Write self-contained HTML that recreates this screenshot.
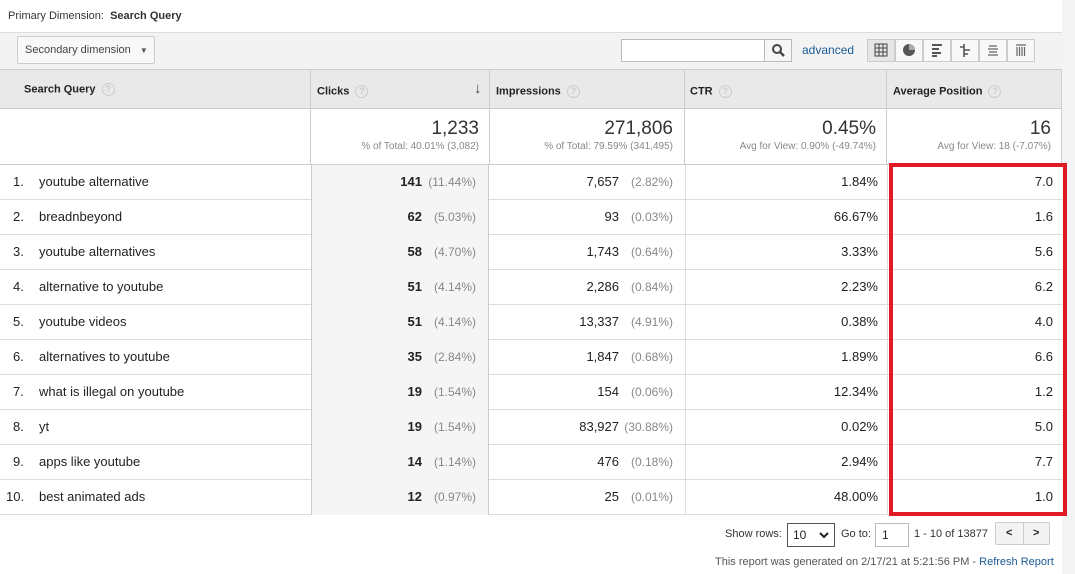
<!DOCTYPE html><html><head><style>
*{margin:0;padding:0;box-sizing:border-box}
body{width:1075px;height:574px;background:#fff;font-family:"Liberation Sans",Arial,sans-serif;color:#222;position:relative;overflow:hidden;font-size:13px}
.a{position:absolute}
.hdr{font-weight:bold;font-size:11px;color:#222}
.q{display:inline-block;width:13px;height:13px;border-radius:50%;border:1px solid #ccc;color:#bbb;font-size:9px;text-align:center;line-height:11px;font-weight:normal;margin-left:6px;vertical-align:middle}
.row{position:absolute;left:0;width:1062px;height:35px;border-bottom:1px solid #ddd}
.c{position:absolute;top:0;height:35px;line-height:34px;white-space:nowrap}
.n{left:13px}.t{left:39px}
.k{left:311px;width:178px;background:#f5f5f5;border-left:1px solid #ccc;border-right:1px solid #ccc;text-align:right;padding-right:12px}
.k b{font-weight:bold}
.p{display:inline-block;width:54px;text-align:right;color:#888;font-size:12px}
.im{left:490px;width:195px;text-align:right;padding-right:12px}
.ct{left:685px;width:202px;text-align:right;padding-right:9px;border-left:1px solid #ddd}
.av{left:887px;width:175px;text-align:right;padding-right:9px;border-left:1px solid #ddd}
.ib{position:absolute;top:39px;width:28px;height:23px;border:1px solid #ccc;background:#f8f8f8}
</style></head><body>
<div class="a" style="left:8px;top:10px;font-size:11px;color:#333">Primary Dimension: &nbsp;<b>Search Query</b></div>
<div class="a" style="left:0;top:32px;width:1062px;height:37px;background:#f3f3f3;border-top:1px solid #ddd"></div>
<div class="a" style="left:1062px;top:0;width:13px;height:574px;background:#f4f4f4"></div>
<div class="a" style="left:17px;top:36px;width:138px;height:28px;border:1px solid #ccc;background:#f8f8f8;border-radius:2px;font-size:11px;color:#444;line-height:26px;padding-left:7px">Secondary dimension <span style="font-size:8px;margin-left:6px;color:#555">▼</span></div>
<div class="a" style="left:621px;top:39px;width:144px;height:23px;border:1px solid #bbb;background:#fff"></div>
<div class="a" style="left:764px;top:39px;width:28px;height:23px;border:1px solid #bbb;background:#f6f6f6">
<svg width="26" height="21" viewBox="0 0 26 21"><circle cx="12" cy="9" r="4" fill="none" stroke="#444" stroke-width="2"/><path d="M15 12l4 4" stroke="#444" stroke-width="2.5"/></svg></div>
<div class="a" style="left:802px;top:43px;color:#1a5a96;font-size:12px">advanced</div>
<div class="ib" style="left:867px;background:#e6e6e6"><svg width="26" height="21"><path d="M7 4h12v12H7zM11 4v12M15 4v12M7 8h12M7 12h12" stroke="#444" fill="none"/></svg></div>
<div class="ib" style="left:895px"><svg width="26" height="21"><circle cx="13" cy="10" r="6" fill="#555"/><path d="M13 10V4A6 6 0 0 1 19 10z" fill="#aaa"/></svg></div>
<div class="ib" style="left:923px"><svg width="26" height="21"><path d="M8 5h10M8 9h7M8 13h9M8 16h5" stroke="#555" stroke-width="2"/></svg></div>
<div class="ib" style="left:951px"><svg width="26" height="21"><path d="M12 4v13M8 7h4M12 10h6M12 14h4" stroke="#555" stroke-width="1.6"/></svg></div>
<div class="ib" style="left:979px"><svg width="26" height="21"><path d="M9 6h8M8 9h10M9 12h8M8 15h10" stroke="#666" stroke-width="1.3"/></svg></div>
<div class="ib" style="left:1007px"><svg width="26" height="21"><path d="M8 5h10M9 7v9M11.5 7v9M14 7v9M16.5 7v9" stroke="#666" stroke-width="1.2"/></svg></div>

<div class="a" style="left:0;top:69px;width:1062px;height:40px;background:#e9e9e9;border-top:1px solid #ccc;border-bottom:1px solid #ccc"></div>
<div class="a hdr" style="left:24px;top:83px">Search Query<span class="q">?</span></div>
<div class="a" style="left:310px;top:69px;width:1px;height:96px;background:#ccc"></div>
<div class="a hdr" style="left:317px;top:85px">Clicks<span class="q">?</span></div>
<div class="a" style="left:474px;top:80px;font-size:15px;color:#444;font-weight:bold">↓</div>
<div class="a" style="left:489px;top:69px;width:1px;height:96px;background:#ccc"></div>
<div class="a hdr" style="left:496px;top:85px">Impressions<span class="q">?</span></div>
<div class="a" style="left:684px;top:69px;width:1px;height:96px;background:#ccc"></div>
<div class="a hdr" style="left:690px;top:85px">CTR<span class="q">?</span></div>
<div class="a" style="left:886px;top:69px;width:1px;height:96px;background:#ccc"></div>
<div class="a hdr" style="left:893px;top:85px">Average Position<span class="q">?</span></div>
<div class="a" style="left:1061px;top:69px;width:1px;height:96px;background:#ccc"></div>
<div class="a" style="left:0;top:164px;width:1062px;height:1px;background:#ccc"></div>

<div class="a" style="left:311px;top:118px;width:168px;text-align:right;font-size:19px;color:#333">1,233</div>
<div class="a" style="left:311px;top:141px;width:168px;text-align:right;font-size:10px;color:#888">% of Total: 40.01% (3,082)</div>
<div class="a" style="left:490px;top:118px;width:183px;text-align:right;font-size:19px;color:#333">271,806</div>
<div class="a" style="left:490px;top:141px;width:183px;text-align:right;font-size:10px;color:#888">% of Total: 79.59% (341,495)</div>
<div class="a" style="left:685px;top:118px;width:191px;text-align:right;font-size:19px;color:#333">0.45%</div>
<div class="a" style="left:685px;top:141px;width:191px;text-align:right;font-size:10px;color:#888">Avg for View: 0.90% (-49.74%)</div>
<div class="a" style="left:887px;top:118px;width:164px;text-align:right;font-size:19px;color:#333">16</div>
<div class="a" style="left:887px;top:141px;width:164px;text-align:right;font-size:10px;color:#888">Avg for View: 18 (-7.07%)</div>

<div class="row" style="top:165px"><span class="c n">1.</span><span class="c t">youtube alternative</span><span class="c k"><b>141</b><span class="p">(11.44%)</span></span><span class="c im">7,657<span class="p">(2.82%)</span></span><span class="c ct">1.84%</span><span class="c av">7.0</span></div>
<div class="row" style="top:200px"><span class="c n">2.</span><span class="c t">breadnbeyond</span><span class="c k"><b>62</b><span class="p">(5.03%)</span></span><span class="c im">93<span class="p">(0.03%)</span></span><span class="c ct">66.67%</span><span class="c av">1.6</span></div>
<div class="row" style="top:235px"><span class="c n">3.</span><span class="c t">youtube alternatives</span><span class="c k"><b>58</b><span class="p">(4.70%)</span></span><span class="c im">1,743<span class="p">(0.64%)</span></span><span class="c ct">3.33%</span><span class="c av">5.6</span></div>
<div class="row" style="top:270px"><span class="c n">4.</span><span class="c t">alternative to youtube</span><span class="c k"><b>51</b><span class="p">(4.14%)</span></span><span class="c im">2,286<span class="p">(0.84%)</span></span><span class="c ct">2.23%</span><span class="c av">6.2</span></div>
<div class="row" style="top:305px"><span class="c n">5.</span><span class="c t">youtube videos</span><span class="c k"><b>51</b><span class="p">(4.14%)</span></span><span class="c im">13,337<span class="p">(4.91%)</span></span><span class="c ct">0.38%</span><span class="c av">4.0</span></div>
<div class="row" style="top:340px"><span class="c n">6.</span><span class="c t">alternatives to youtube</span><span class="c k"><b>35</b><span class="p">(2.84%)</span></span><span class="c im">1,847<span class="p">(0.68%)</span></span><span class="c ct">1.89%</span><span class="c av">6.6</span></div>
<div class="row" style="top:375px"><span class="c n">7.</span><span class="c t">what is illegal on youtube</span><span class="c k"><b>19</b><span class="p">(1.54%)</span></span><span class="c im">154<span class="p">(0.06%)</span></span><span class="c ct">12.34%</span><span class="c av">1.2</span></div>
<div class="row" style="top:410px"><span class="c n">8.</span><span class="c t">yt</span><span class="c k"><b>19</b><span class="p">(1.54%)</span></span><span class="c im">83,927<span class="p">(30.88%)</span></span><span class="c ct">0.02%</span><span class="c av">5.0</span></div>
<div class="row" style="top:445px"><span class="c n">9.</span><span class="c t">apps like youtube</span><span class="c k"><b>14</b><span class="p">(1.14%)</span></span><span class="c im">476<span class="p">(0.18%)</span></span><span class="c ct">2.94%</span><span class="c av">7.7</span></div>
<div class="row" style="top:480px"><span class="c n" style="left:6px">10.</span><span class="c t">best animated ads</span><span class="c k"><b>12</b><span class="p">(0.97%)</span></span><span class="c im">25<span class="p">(0.01%)</span></span><span class="c ct">48.00%</span><span class="c av">1.0</span></div>

<div class="a" style="left:889px;top:163px;width:178px;height:353px;border:4px solid #e01b24"></div>

<div class="a" style="left:725px;top:528px;font-size:11px;color:#333">Show rows:</div>
<div class="a" style="left:787px;top:523px;width:48px;height:24px;border:1px solid #555;font-size:12px;line-height:22px;padding-left:5px;background:#fff">10<svg style="position:absolute;right:5px;top:8px" width="10" height="7"><path d="M1 1l4 4 4-4" stroke="#222" stroke-width="2" fill="none"/></svg></div>
<div class="a" style="left:841px;top:528px;font-size:11px;color:#333">Go to:</div>
<div class="a" style="left:875px;top:523px;width:34px;height:24px;border:1px solid #bbb;font-size:12px;line-height:22px;padding-left:6px">1</div>
<div class="a" style="left:914px;top:528px;font-size:11px;color:#333">1 - 10 of 13877</div>
<div class="a" style="left:995px;top:522px;width:55px;height:23px;border:1px solid #ccc;border-radius:2px;background:#f3f3f3;font-size:11px;font-weight:bold;line-height:21px"><span style="position:absolute;left:10px">&lt;</span><span style="position:absolute;left:27px;top:0;width:1px;height:21px;background:#ccc"></span><span style="position:absolute;left:37px">&gt;</span></div>
<div class="a" style="left:715px;top:556px;font-size:11px;color:#555;white-space:nowrap">This report was generated on 2/17/21 at 5:21:56 PM - <span style="color:#1a5a96">Refresh Report</span></div>
</body></html>
